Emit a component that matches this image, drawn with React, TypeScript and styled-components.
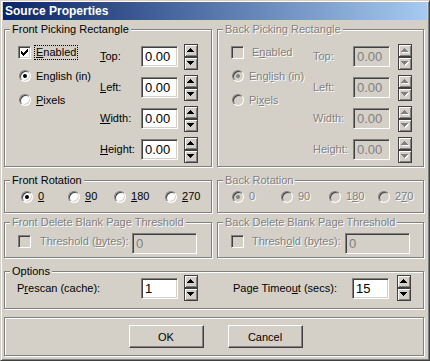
import React from 'react';
import styled, { createGlobalStyle, css } from 'styled-components';

const GlobalStyle = createGlobalStyle`
  html, body {
    margin: 0;
    padding: 0;
    background: #d4d0c8;
  }
  body {
    font-family: "Liberation Sans", Arial, sans-serif;
    font-size: 11px;
    color: #000;
  }
  * {
    box-sizing: border-box;
  }
`;

const disabledText = css`
  color: #808080;
  text-shadow: 1px 1px 0 #fff;
`;

const Window = styled.div`
  width: 430px;
  height: 361px;
  background: #d4d0c8;
  border: 1px solid;
  border-color: #d4d0c8 #404040 #404040 #d4d0c8;
  box-shadow: inset 1px 1px #fff, inset -1px -1px #808080;
  padding: 1px 2px 2px 2px;
  display: flex;
  flex-direction: column;
  overflow: hidden;
`;

const TitleBar = styled.div`
  height: 18px;
  flex: none;
  display: flex;
  align-items: center;
  padding-left: 2px;
  background: linear-gradient(90deg, #0a246a 0%, #a6caf0 100%);
  color: #fff;
  font-weight: bold;
  font-size: 12px;
`;

const Body = styled.div`
  margin-left: 1px;
  width: 420px;
  display: flex;
  flex-direction: column;
`;

const Columns = styled.div<{ $top: number }>`
  display: grid;
  grid-template-columns: 208px 207px;
  column-gap: 5px;
  margin-top: ${p => p.$top}px;
`;

const Group = styled.div<{ $h: number; $top?: number }>`
  position: relative;
  height: ${p => p.$h}px;
  margin-top: ${p => p.$top ?? 0}px;
  border: 1px solid #808080;
  box-shadow: inset 1px 1px #fff, 1px 1px #fff;
`;

const Legend = styled.span<{ $dis?: boolean }>`
  position: absolute;
  top: -7px;
  left: 5px;
  padding: 0 2px;
  line-height: 13px;
  background: #d4d0c8;
  white-space: nowrap;
  ${p => p.$dis && disabledText}
`;

const Text = styled.span<{ $dis?: boolean }>`
  white-space: nowrap;
  line-height: 13px;
  ${p => p.$dis && disabledText}
`;

/* ---------- checkbox / radio ---------- */

const Item = styled.label`
  display: flex;
  align-items: center;
  height: 13px;
`;

const CheckBox = styled.span<{ $dis?: boolean }>`
  flex: none;
  width: 13px;
  height: 13px;
  border: 1px solid;
  border-color: #808080 #fff #fff #808080;
  box-shadow: inset 1px 1px #404040, inset -1px -1px #d4d0c8;
  background: ${p => (p.$dis ? '#d4d0c8' : '#fff')};
  display: flex;
  align-items: center;
  justify-content: center;
`;

const CheckText = styled(Text)<{ $focus?: boolean; $gap: number }>`
  margin-left: ${p => p.$gap}px;
  padding: 0 1px;
  border: 1px dotted ${p => (p.$focus ? '#000' : 'transparent')};
`;

const RadioDot = styled.span<{ $on?: boolean; $dis?: boolean }>`
  position: relative;
  flex: none;
  width: 12px;
  height: 12px;
  margin-left: 1px;
  border-radius: 50%;
  border: 1px solid;
  border-color: #808080 #fff #fff #808080;
  box-shadow: inset 1px 1px #404040, inset -1px -1px #d4d0c8;
  background: ${p => (p.$dis ? '#d4d0c8' : '#fff')};
  &::after {
    content: '';
    display: ${p => (p.$on ? 'block' : 'none')};
    position: absolute;
    left: 3px;
    top: 3px;
    width: 4px;
    height: 4px;
    border-radius: 50%;
    background: ${p => (p.$dis ? '#808080' : '#000')};
  }
`;

const RadioText = styled(Text)`
  margin-left: 5px;
`;

const CheckMark = () => (
  <svg width="7" height="7" viewBox="0 0 7 7" shapeRendering="crispEdges">
    <path
      fill="#000"
      d="M6 0h1v1h-1z M5 1h2v1h-2z M0 2h1v1h-1z M4 2h3v1h-3z M0 3h2v1h-2z M3 3h3v1h-3z M0 4h5v1h-5z M1 5h3v1h-3z M2 6h1v1h-1z"
    />
  </svg>
);

const Check: React.FC<{
  checked?: boolean;
  dis?: boolean;
  focus?: boolean;
  gap?: number;
  children: React.ReactNode;
}> = ({ checked, dis, focus, gap = 3, children }) => (
  <Item>
    <CheckBox $dis={dis}>{checked && <CheckMark />}</CheckBox>
    <CheckText $dis={dis} $focus={focus} $gap={gap}>
      {children}
    </CheckText>
  </Item>
);

const Radio: React.FC<{ on?: boolean; dis?: boolean; children: React.ReactNode }> = ({
  on,
  dis,
  children,
}) => (
  <Item>
    <RadioDot $on={on} $dis={dis} />
    <RadioText $dis={dis}>{children}</RadioText>
  </Item>
);

/* ---------- edit + spinner ---------- */

const Edit = styled.input<{ $w: number }>`
  width: ${p => p.$w}px;
  height: 21px;
  margin: 0;
  padding: 0 0 0 3px;
  border: 1px solid;
  border-color: #808080 #fff #fff #808080;
  box-shadow: inset 1px 1px #404040, inset -1px -1px #d4d0c8;
  background: #fff;
  font-family: "Liberation Sans", Arial, sans-serif;
  font-size: 13px;
  color: #000;
  outline: none;
  &:disabled {
    background: #d4d0c8;
    color: #808080;
    -webkit-text-fill-color: #808080;
    opacity: 1;
  }
`;

const Spin = styled.div`
  flex: none;
  width: 14px;
  display: flex;
  flex-direction: column;
`;

const SpinBtn = styled.div`
  height: 13px;
  border: 1px solid #404040;
  background: #d4d0c8;
  box-shadow: inset 1px 1px #fff, inset -1px -1px #808080;
  display: flex;
  align-items: center;
  justify-content: center;
`;

const ARROW_UP = 'M3 0h1v1h1v1h1v1h1v1H0V3h1V2h1V1h1z';
const ARROW_DOWN = 'M0 0h7v1H6v1H5v1H4v1H3V3H2V2H1V1H0z';

const Arrow: React.FC<{ down?: boolean; dis?: boolean }> = ({ down, dis }) => (
  <svg width="8" height="5" viewBox="0 0 8 5" shapeRendering="crispEdges">
    {dis && <path fill="#fff" transform="translate(1 1)" d={down ? ARROW_DOWN : ARROW_UP} />}
    <path fill={dis ? '#808080' : '#000'} d={down ? ARROW_DOWN : ARROW_UP} />
  </svg>
);

const Spinner: React.FC<{ dis?: boolean }> = ({ dis }) => (
  <Spin>
    <SpinBtn>
      <Arrow dis={dis} />
    </SpinBtn>
    <SpinBtn>
      <Arrow down dis={dis} />
    </SpinBtn>
  </Spin>
);

/* ---------- picking rectangle ---------- */

const PickInner = styled.div`
  display: flex;
  padding: 11px 0 0 13px;
`;

const LeftCol = styled.div`
  width: 82px;
  flex: none;
  display: flex;
  flex-direction: column;
`;

const LeftRow = styled.div<{ $h: number }>`
  height: ${p => p.$h}px;
  display: flex;
  align-items: center;
`;

const DimGrid = styled.div<{ $label: number; $field: number }>`
  display: grid;
  grid-template-columns: ${p => p.$label}px ${p => p.$field}px 14px;
  grid-auto-rows: 31px;
  align-items: center;
`;

const PickingGroup: React.FC<{ back?: boolean }> = ({ back }) => {
  const dis = back;
  const dims = back
    ? [<>Top:</>, <>Left:</>, <>Width:</>, <>Height:</>]
    : [
        <><u>T</u>op:</>,
        <><u>L</u>eft:</>,
        <><u>W</u>idth:</>,
        <><u>H</u>eight:</>,
      ];
  return (
    <Group $h={138}>
      <Legend $dis={dis}>{back ? 'Back Picking Rectangle' : 'Front Picking Rectangle'}</Legend>
      <PickInner>
        <LeftCol>
          <LeftRow $h={23}>
            {back ? (
              <Check dis gap={6}>
                E<u>n</u>abled
              </Check>
            ) : (
              <Check checked focus>
                <u>E</u>nabled
              </Check>
            )}
          </LeftRow>
          <LeftRow $h={24}>
            <Radio on dis={dis}>
              {back ? (
                <>
                  Engl<u>i</u>sh (in)
                </>
              ) : (
                'English (in)'
              )}
            </Radio>
          </LeftRow>
          <LeftRow $h={24}>
            <Radio dis={dis}>
              {back ? (
                <>
                  Pi<u>x</u>els
                </>
              ) : (
                <>
                  <u>P</u>ixels
                </>
              )}
            </Radio>
          </LeftRow>
        </LeftCol>
        <DimGrid $label={back ? 40 : 41} $field={back ? 45 : 43}>
          {dims.map((label, i) => (
            <React.Fragment key={i}>
              <Text $dis={dis}>{label}</Text>
              <Edit $w={37} defaultValue="0.00" disabled={dis} readOnly />
              <Spinner dis={dis} />
            </React.Fragment>
          ))}
        </DimGrid>
      </PickInner>
    </Group>
  );
};

/* ---------- rotation ---------- */

const RotRow = styled.div<{ $left: number }>`
  display: flex;
  padding: 9px 0 0 ${p => p.$left}px;
`;

const RotCell = styled.div<{ $w?: number }>`
  width: ${p => (p.$w ? `${p.$w}px` : 'auto')};
  flex: none;
`;

const RotationGroup: React.FC<{ back?: boolean }> = ({ back }) => {
  const widths = back ? [49, 48, 49] : [47, 46, 51];
  const labels = back
    ? [<>0</>, <>90</>, <>1<u>8</u>0</>, <>2<u>7</u>0</>]
    : [<><u>0</u></>, <><u>9</u>0</>, <><u>1</u>80</>, <><u>2</u>70</>];
  return (
    <Group $h={33}>
      <Legend $dis={back}>{back ? 'Back Rotation' : 'Front Rotation'}</Legend>
      <RotRow $left={back ? 13 : 15}>
        {labels.map((l, i) => (
          <RotCell key={i} $w={widths[i]}>
            <Radio on={i === 0} dis={back}>
              {l}
            </Radio>
          </RotCell>
        ))}
      </RotRow>
    </Group>
  );
};

/* ---------- delete threshold ---------- */

const ThreshRow = styled.div`
  display: flex;
  align-items: flex-start;
  padding: 10px 0 0 13px;
`;

const ThreshLabel = styled.div`
  width: 114px;
  flex: none;
  margin-top: 2px;
`;

const ThresholdGroup: React.FC<{ back?: boolean }> = ({ back }) => (
  <Group $h={36}>
    <Legend $dis>{back ? 'Back Delete Blank Page Threshold' : 'Front Delete Blank Page Threshold'}</Legend>
    <ThreshRow>
      <ThreshLabel>
        <Check dis gap={back ? 6 : 7}>
          {back ? (
            <>
              Thresh<u>o</u>ld (bytes):
            </>
          ) : (
            <>
              Threshold (<u>b</u>ytes):
            </>
          )}
        </Check>
      </ThreshLabel>
      <Edit $w={65} defaultValue="0" disabled readOnly />
    </ThreshRow>
  </Group>
);

/* ---------- options ---------- */

const OptionsRow = styled.div`
  display: grid;
  grid-template-columns: 212px 1fr;
  padding-top: 3px;
`;

const OptionCell = styled.div<{ $pad: number; $label: number; $gap: number }>`
  display: flex;
  align-items: center;
  height: 26px;
  padding-left: ${p => p.$pad}px;
  & > :first-child {
    width: ${p => p.$label}px;
    flex: none;
  }
  & > :last-child {
    margin-left: ${p => p.$gap}px;
  }
`;

/* ---------- buttons ---------- */

const ButtonRow = styled.div`
  display: flex;
  justify-content: center;
  align-items: center;
  gap: 24px;
  height: 100%;
  padding-left: 3px;
`;

const Button = styled.button`
  width: 75px;
  height: 23px;
  padding: 0;
  background: #d4d0c8;
  border: 1px solid;
  border-color: #fff #404040 #404040 #fff;
  box-shadow: inset -1px -1px #808080, inset 1px 1px #d4d0c8;
  font-family: "Liberation Sans", Arial, sans-serif;
  font-size: 11px;
  color: #000;
`;

export default function App() {
  return (
    <>
      <GlobalStyle />
      <Window>
        <TitleBar>Source Properties</TitleBar>
        <Body>
          <Columns $top={9}>
            <PickingGroup />
            <PickingGroup back />
          </Columns>
          <Columns $top={13}>
            <RotationGroup />
            <RotationGroup back />
          </Columns>
          <Columns $top={9}>
            <ThresholdGroup />
            <ThresholdGroup back />
          </Columns>
          <Group $h={38} $top={13}>
            <Legend>Options</Legend>
            <OptionsRow>
              <OptionCell $pad={12} $label={124} $gap={6}>
                <Text>
                  P<u>r</u>escan (cache):
                </Text>
                <Edit $w={37} defaultValue="1" readOnly />
                <Spinner />
              </OptionCell>
              <OptionCell $pad={16} $label={119} $gap={8}>
                <Text>
                  Page Timeo<u>u</u>t (secs):
                </Text>
                <Edit $w={37} defaultValue="15" readOnly />
                <Spinner />
              </OptionCell>
            </OptionsRow>
          </Group>
          <Group $h={39} $top={8}>
            <ButtonRow>
              <Button>OK</Button>
              <Button>Cancel</Button>
            </ButtonRow>
          </Group>
        </Body>
      </Window>
    </>
  );
}
